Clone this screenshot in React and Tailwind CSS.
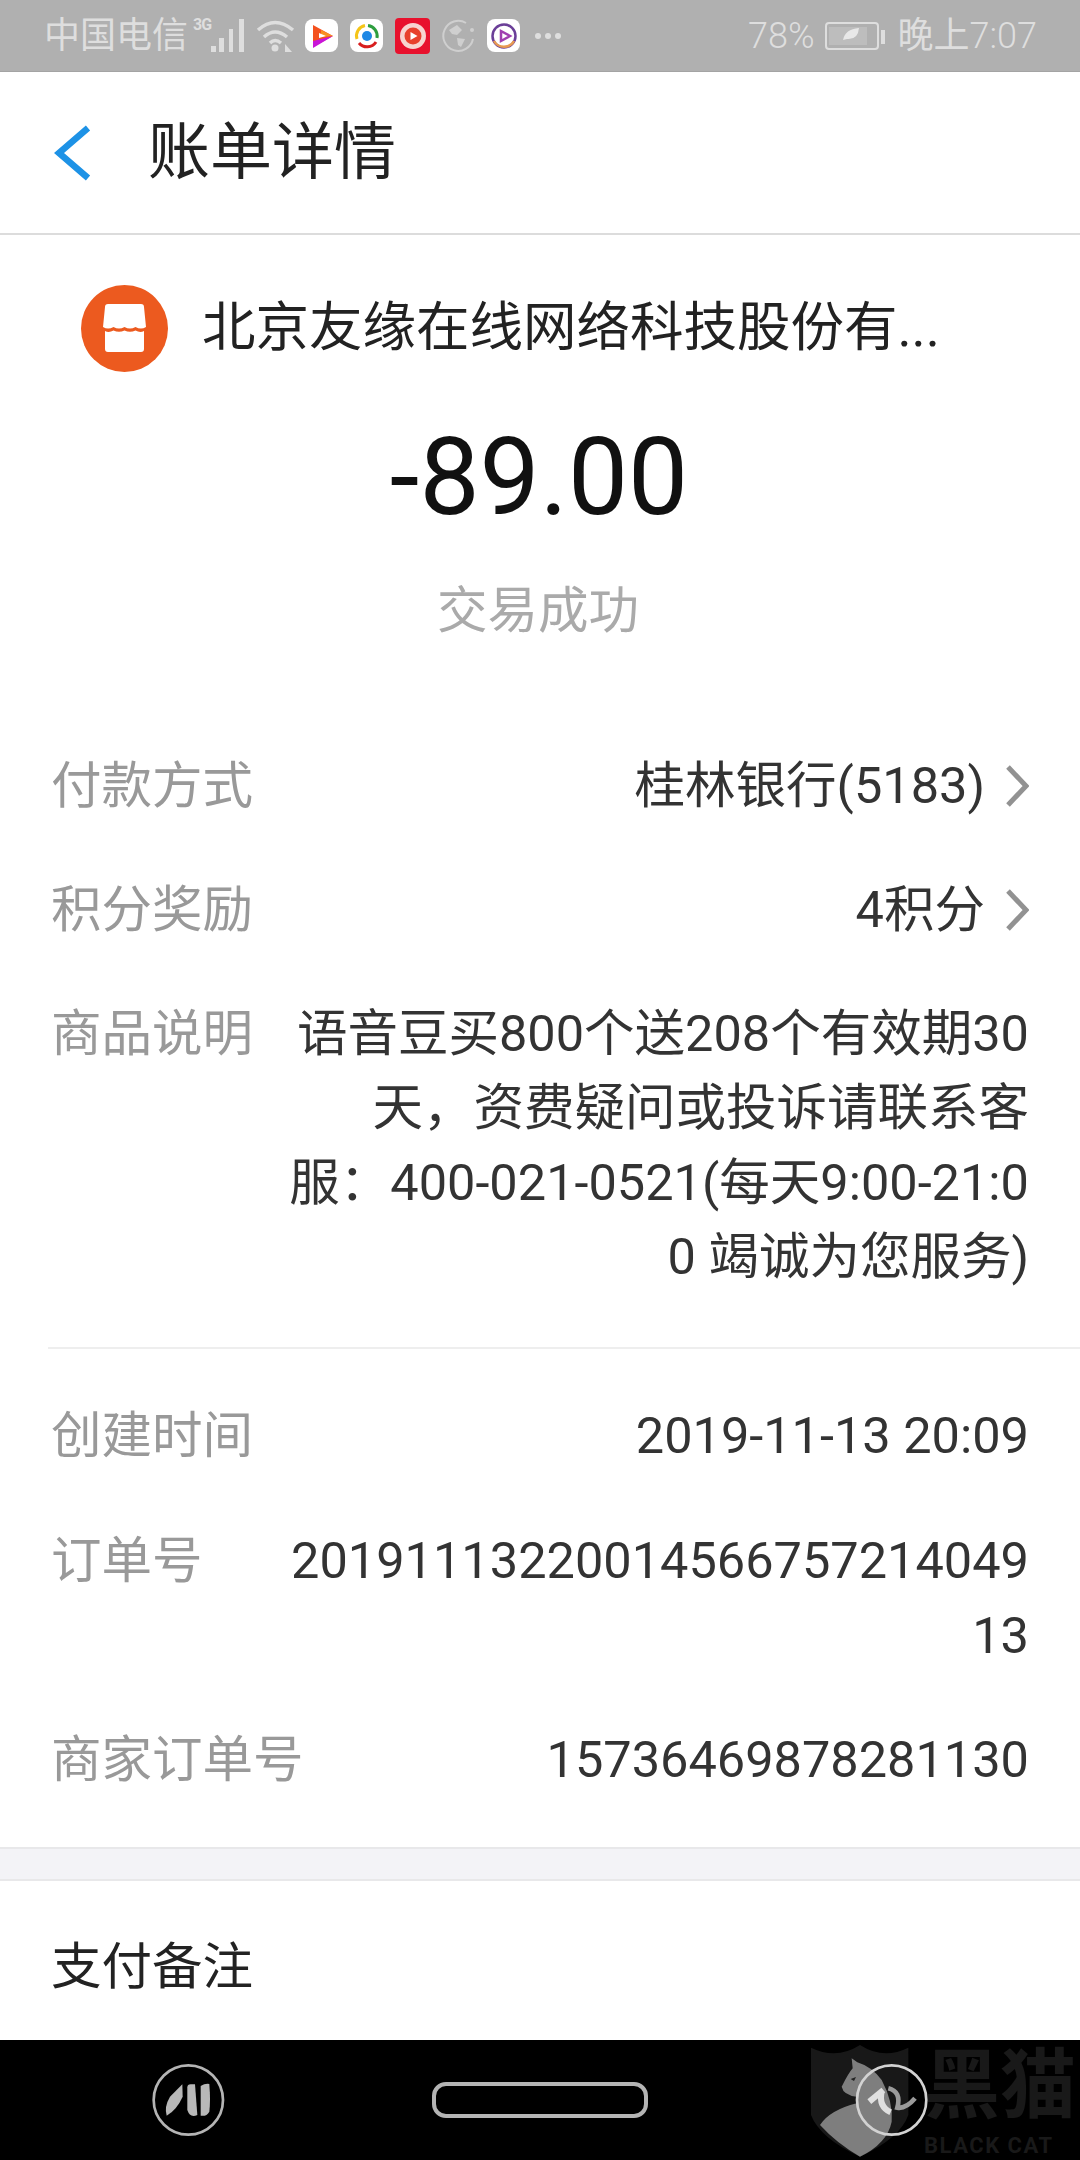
const Chevron = () => (
  <svg width="24" height="44" viewBox="0 0 24 44" fill="none" className="ml-[20px] shrink-0">
    <path d="M3 3 L21 22 L3 41" stroke="#929292" strokeWidth="5" />
  </svg>
);

const AppIcon = ({ children }) => (
  <div className="w-[33px] h-[33px] rounded-lg bg-white flex items-center justify-center">
    <svg width="28" height="28" viewBox="0 0 28 28">{children}</svg>
  </div>
);

const StatusBar = () => (
  <div className="h-[72px] bg-[#b0b0b0] flex items-center pl-[44px] pr-[43px] text-[36px] text-[#dedede] border-b border-[#a4a4a4] shrink-0">
    <span className="leading-none w-[141px] whitespace-nowrap">中国电信</span>
    <div className="relative w-[54px] h-[34px] ml-[8px]">
      <span className="absolute left-0 -top-[2px] text-[16px] font-bold tracking-[-1px] leading-none">3G</span>
      <svg width="54" height="34" viewBox="0 0 54 34" fill="#dedede">
        <rect x="18" y="27" width="5" height="6" />
        <rect x="26" y="19" width="5" height="14" />
        <rect x="36" y="10" width="4" height="23" />
        <rect x="46" y="0" width="5" height="33" />
      </svg>
    </div>
    <svg width="40" height="34" viewBox="0 0 40 34" fill="none" stroke="#dedede" strokeWidth="3.5" className="ml-[9px]">
      <path d="M2 11 Q19 -4 37 11" />
      <path d="M8 18 Q19 8 31 18" />
      <path d="M14 24 Q19 19 25 24" />
      <circle cx="19" cy="29" r="3.5" fill="#dedede" stroke="none" />
      <path d="M29 33 L29 25 L36 33 Z" fill="#dedede" stroke="none" />
    </svg>
    <div className="flex items-center ml-[9px] gap-[12px]">
      <AppIcon>
        <path d="M5 3 L25 14 L5 25 Z" fill="#f4511e" />
        <path d="M13 8 L25 14 L13 15 Z" fill="#f89020" />
        <path d="M5 19 L25 14 L5 26 Z" fill="#c814d8" />
        <path d="M11 11 L18 14 L11 16 Z" fill="#ffffff" />
      </AppIcon>
      <AppIcon>
        <path d="M4 17 A10.5 10.5 0 0 1 12 3.5" fill="none" stroke="#f5c518" strokeWidth="3" />
        <path d="M15 3.5 A10.5 10.5 0 0 1 24 16" fill="none" stroke="#2e9e3f" strokeWidth="3" />
        <path d="M6 21 A10.5 10.5 0 0 0 23 20" fill="none" stroke="#d81e1e" strokeWidth="3" />
        <circle cx="14" cy="14" r="5" fill="#1e88e5" />
      </AppIcon>
      <div className="w-[35px] h-[36px] rounded-sm bg-[#e8112d] flex items-center justify-center">
        <svg width="28" height="28" viewBox="0 0 28 28">
          <circle cx="14" cy="14" r="13" fill="#f7d4d0" />
          <circle cx="14" cy="14" r="8.5" fill="#e8412d" />
          <path d="M11.5 10 L18.5 14 L11.5 18 Z" fill="#ffffff" />
        </svg>
      </div>
      <svg width="33" height="33" viewBox="0 0 33 33" fill="none">
        <path d="M24 4 A15 15 0 1 0 31 20" stroke="#cfcfcf" strokeWidth="2" />
        <circle cx="30" cy="11" r="2" fill="#cfcfcf" />
        <path d="M7 11 L15 6 L20 11 L15 16 L10 15 Z M15 19 L23 20 L19 28 L16 26 Z" fill="#cfcfcf" />
      </svg>
      <AppIcon>
        <circle cx="14" cy="14" r="11.5" fill="none" stroke="#6b3f98" strokeWidth="2.5" />
        <path d="M4 19 A11.5 11.5 0 0 0 24 19" fill="none" stroke="#e89a50" strokeWidth="2.5" />
        <path d="M11 9 L20 14 L11 19 Z" fill="#ffffff" stroke="#a03fb0" strokeWidth="2.5" />
      </AppIcon>
    </div>
    <div className="flex gap-[4px] ml-[15px]">
      <span className="w-[6px] h-[6px] rounded-full bg-[#dedede]" />
      <span className="w-[6px] h-[6px] rounded-full bg-[#dedede]" />
      <span className="w-[6px] h-[6px] rounded-full bg-[#dedede]" />
    </div>
    <span className="ml-auto leading-none font-light">78%</span>
    <svg width="61" height="28" viewBox="0 0 61 28" fill="none" className="ml-[10px]">
      <rect x="1" y="1" width="52" height="26" rx="3" stroke="#dedede" strokeWidth="2" />
      <rect x="4" y="5" width="38" height="18" fill="#bdbdbd" />
      <path d="M18 18 Q20 7 34 6 Q33 18 22 17 Z" fill="#e8e8e8" />
      <rect x="56" y="8" width="4" height="14" fill="#dedede" />
    </svg>
    <span className="ml-[12px] leading-none whitespace-nowrap">晚上<span className="font-light">7:07</span></span>
  </div>
);

const Row = ({ label, className = "", children }) => (
  <div className={`flex justify-between pl-[51px] pr-[51px] ${className}`}>
    <span className="text-[#999999] shrink-0">{label}</span>
    {children}
  </div>
);

const Value = ({ children }) => <div className="text-right text-[#333333]">{children}</div>;

const ShopLogo = () => (
  <svg width="87" height="87" viewBox="0 0 87 87" className="shrink-0">
    <circle cx="43.5" cy="43.5" r="43.5" fill="#ec5a1f" />
    <path d="M24 22 Q24 19 27 19 L60 19 Q63 19 63 22 L65 42 Q60 45 54.5 42 Q49 45 43.5 42 Q38 45 32.5 42 Q27 45 22 42 Z" fill="#ffffff" />
    <path d="M24 46 Q28 48 32.5 45.5 Q38 48 43.5 45.5 Q49 48 54.5 45.5 Q59 48 63 46 L63 64 Q63 67 60 67 L27 67 Q24 67 24 64 Z" fill="#ffffff" />
  </svg>
);

const NavBar = () => (
  <div className="relative h-[120px] bg-black shrink-0 overflow-hidden">
    {/* watermark over the nav buttons, path coords are 3x */}
    <svg width="280" height="125" viewBox="0 0 840 375" className="absolute left-[800px] -top-[5px]">
      <path d="M33 38 Q110 75 180 30 Q250 75 325 38 L325 240 Q300 310 180 365 Q60 310 33 240 Z" fill="#181818" />
      <path d="M155 70 L172 82 Q215 95 245 135 Q280 200 275 260 Q262 325 180 365 Q110 325 60 270 Q90 225 170 205 L170 185 Q130 180 125 155 Q145 115 158 100 Z" fill="#7e7e7e" />
      <path d="M152 132 L168 126 L162 138 Z" fill="#222222" />
      <circle cx="275" cy="195" r="104" fill="none" stroke="#d2d2d2" strokeWidth="8" />
      <path d="M265 160 Q305 170 292 218 Q318 222 345 190" fill="none" stroke="#9a9a9a" strokeWidth="14" />
      <path d="M208 200 L250 165" fill="none" stroke="#e0e0e0" strokeWidth="18" />
      <path d="M245 170 Q235 215 272 232" fill="none" stroke="#e0e0e0" strokeWidth="18" />
    </svg>
    <div className="absolute left-[924px] top-[8px] w-[156px] text-[#191919] font-bold leading-none">
      <div className="text-[76px] whitespace-nowrap">黑猫</div>
      <div className="text-[22px] mt-[11px] tracking-[1.5px] whitespace-nowrap">BLACK CAT</div>
    </div>
    <svg width="100" height="100" viewBox="0 0 300 300" fill="#b8b8b8" className="absolute left-[140px] top-[10px]">
      <circle cx="145" cy="150" r="104" fill="none" stroke="#b4b4b4" strokeWidth="8" />
      <path d="M127 103 L128 140 Q110 180 80 197 Q72 170 90 140 Z" />
      <path d="M142 112 Q142 103 152 103 L165 103 L172 195 Q150 205 142 180 Z" />
      <path d="M182 108 Q195 100 208 102 Q212 150 208 185 Q200 200 182 197 Z" />
    </svg>
    <div className="absolute left-[432px] top-[42px] w-[216px] h-[36px] rounded-[14px] border-[4px] border-[#b4b4b4]" />
  </div>
);

export default function App() {
  return (
    <div className="w-[1080px] h-[2160px] flex flex-col bg-white overflow-hidden font-['Roboto','Noto_Sans_CJK_SC',sans-serif] text-[50.5px] leading-[74.5px]">
      <StatusBar />

      <div className="h-[163px] flex items-center border-b-2 border-[#dcdcdc] shrink-0">
        <svg width="38" height="56" viewBox="0 0 38 56" fill="none" className="ml-[53px]">
          <path d="M35 3 L6 28 L35 53" stroke="#1d92e6" strokeWidth="6.5" />
        </svg>
        <h1 className="ml-[57px] text-[62px] text-[#222222] leading-none whitespace-nowrap">账单详情</h1>
      </div>

      <div className="flex items-center h-[186px] pl-[81px] shrink-0">
        <ShopLogo />
        <span className="ml-[34px] text-[53.5px] text-[#222222] whitespace-nowrap leading-none">北京友缘在线网络科技股份有...</span>
      </div>

      <div className="text-center text-[107px] leading-none text-[#111111] mt-[3px] pr-[2px]">-89.00</div>
      <div className="text-center text-[#aaaaaa] mt-[43px] pr-[4px]">交易成功</div>

      <Row label="付款方式" className="mt-[100px]">
        <div className="flex items-center text-[#333333]">
          桂林银行(5183)
          <Chevron />
        </div>
      </Row>
      <Row label="积分奖励" className="mt-[50px]">
        <div className="flex items-center text-[#333333]">
          4积分
          <Chevron />
        </div>
      </Row>
      <Row label="商品说明" className="mt-[49px] pb-[52px]">
        <Value>
          语音豆买800个送208个有效期30<br />
          天，资费疑问或投诉请联系客<br />
          服：400-021-0521(每天9:00-21:0<br />
          0 竭诚为您服务)
        </Value>
      </Row>
      <div className="ml-[48px] border-t-2 border-[#eeeeee]" />

      <Row label="创建时间" className="mt-[50px]">
        <Value>2019-11-13 20:09</Value>
      </Row>
      <Row label="订单号" className="mt-[51px]">
        <Value>
          20191113220014566757214049<br />
          13
        </Value>
      </Row>
      <Row label="商家订单号" className="mt-[50px]">
        <Value>15736469878281130</Value>
      </Row>

      <div className="h-[34px] mt-[49px] bg-[#f3f3f7] border-t-2 border-b-2 border-[#e8e8ea] shrink-0" />

      <div className="flex-1 flex items-center pl-[51px] text-[#222222] pt-[14px]">支付备注</div>

      <NavBar />
    </div>
  );
}
